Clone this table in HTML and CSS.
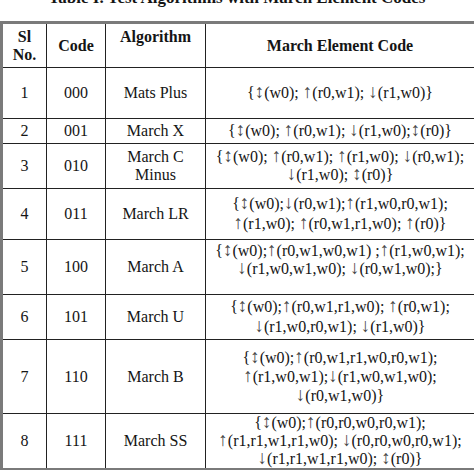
FILE: index.html
```html
<!DOCTYPE html>
<html>
<head>
<meta charset="utf-8">
<link rel="stylesheet" href="styles.css">
</head>
<body>
<div class="title">Table I. Test Algorithms with March Element Codes</div>
<table class="march">
  <colgroup>
    <col class="c1"><col class="c2"><col class="c3"><col class="c4">
  </colgroup>
  <thead>
    <tr class="h">
      <th>Sl<br>No.</th>
      <th>Code</th>
      <th class="top">Algorithm</th>
      <th>March Element Code</th>
    </tr>
  </thead>
  <tbody>
    <tr class="r1"><td>1</td><td>000</td><td>Mats Plus</td><td>{<span class="a">↕</span>(w0); <span class="a">↑</span>(r0,w1); <span class="a">↓</span>(r1,w0)}</td></tr>
    <tr class="r2"><td>2</td><td>001</td><td>March X</td><td>{<span class="a">↕</span>(w0); <span class="a">↑</span>(r0,w1); <span class="a">↓</span>(r1,w0);<span class="a">↕</span>(r0)}</td></tr>
    <tr class="r3"><td>3</td><td>010</td><td>March C<br>Minus</td><td>{<span class="a">↕</span>(w0); <span class="a">↑</span>(r0,w1); <span class="a">↑</span>(r1,w0); <span class="a">↓</span>(r0,w1);<br><span class="a">↓</span>(r1,w0); <span class="a">↕</span>(r0)}</td></tr>
    <tr class="r4"><td>4</td><td>011</td><td>March LR</td><td class="two">{<span class="a">↕</span>(w0);<span class="a">↓</span>(r0,w1);<span class="a">↑</span>(r1,w0,r0,w1);<br><span class="a">↑</span>(r1,w0); <span class="a">↑</span>(r0,w1,r1,w0); <span class="a">↑</span>(r0)}</td></tr>
    <tr class="r5"><td>5</td><td>100</td><td>March A</td><td class="topc">{<span class="a">↕</span>(w0);<span class="a">↑</span>(r0,w1,w0,w1) ;<span class="a">↑</span>(r1,w0,w1);<br><span class="a">↓</span>(r1,w0,w1,w0); <span class="a">↓</span>(r0,w1,w0);}</td></tr>
    <tr class="r6"><td>6</td><td>101</td><td>March U</td><td class="two">{<span class="a">↕</span>(w0);<span class="a">↑</span>(r0,w1,r1,w0); <span class="a">↑</span>(r0,w1);<br><span class="a">↓</span>(r1,w0,r0,w1); <span class="a">↓</span>(r1,w0)}</td></tr>
    <tr class="r7"><td>7</td><td>110</td><td>March B</td><td class="three">{<span class="a">↕</span>(w0);<span class="a">↑</span>(r0,w1,r1,w0,r0,w1);<br><span class="a">↑</span>(r1,w0,w1);<span class="a">↓</span>(r1,w0,w1,w0);<br><span class="a">↓</span>(r0,w1,w0)}</td></tr>
    <tr class="r8"><td>8</td><td>111</td><td>March SS</td><td>{<span class="a">↕</span>(w0);<span class="a">↑</span>(r0,r0,w0,r0,w1);<br><span class="a">↑</span>(r1,r1,w1,r1,w0); <span class="a">↓</span>(r0,r0,w0,r0,w1);<br><span class="a">↓</span>(r1,r1,w1,r1,w0); <span class="a">↕</span>(r0)}</td></tr>
  </tbody>
</table>
</body>
</html>
```

FILE: styles.css
```css
html, body {
  margin: 0;
  padding: 0;
  background: #ffffff;
}
body {
  font-family: "Liberation Serif", "Times New Roman", serif;
  color: #151515;
  overflow: hidden;
}
.title {
  font-weight: bold;
  font-size: 17px;
  text-align: center;
  height: 21px;
  line-height: 21px;
  margin-top: -13px;
  margin-bottom: 13px;
}
.march {
  border-collapse: collapse;
  table-layout: fixed;
  width: 474px;
  border: 3px solid #7a7a7a;
  font-size: 16px;
  line-height: 18px;
}
.c1 { width: 45px; }
.c2 { width: 59px; }
.c3 { width: 100px; }
.c4 { width: 270px; }
.march th, .march td {
  border: 1px solid #222222;
  text-align: center;
  vertical-align: middle;
  padding: 0 2px;
}
.march th {
  font-weight: bold;
  font-size: 16px;
}
.march th.top {
  vertical-align: top;
  padding-top: 4px;
}
.march td.topc {
  vertical-align: top;
  padding-top: 2px;
}
.march td.two {
  line-height: 20px;
}
.march td.three {
  line-height: 19px;
}
.h { height: 45px; }
.r1 { height: 51px; }
.r2 { height: 25px; }
.r3 { height: 45px; }
.r4 { height: 51px; }
.r5 { height: 55px; }
.r6 { height: 45px; }
.r7 { height: 74px; }
.r8 { height: 54px; }
.a {
  color: #4a4a4a;
  font-size: 19px;
  line-height: 0;
}
```
